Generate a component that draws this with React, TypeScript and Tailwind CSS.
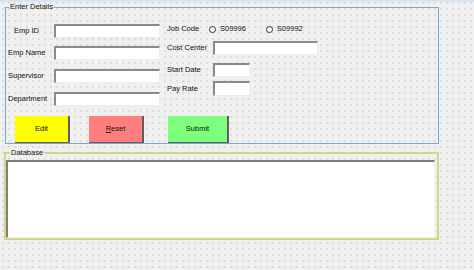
import React from 'react'

const labelCls = 'text-[7.5px] leading-[10px] text-[#111]'
const inputCls =
    'h-[14px] bg-white border-t-2 border-l-2 border-r border-b border-t-[#8a8a8a] border-l-[#8a8a8a] border-r-[#ececec] border-b-[#ececec]'

function Field({ label, width, className = '', labelClass = '' }: { label: string; width: string; className?: string; labelClass?: string }) {
    return (
        <div className={`flex items-center ${className}`}>
            <span className={`${labelCls} w-[46px] shrink-0 ${labelClass}`}>{label}</span>
            <div className={`${inputCls} ${width}`} />
        </div>
    )
}

function Radio({ label, className = '' }: { label: string; className?: string }) {
    return (
        <div className={`flex items-center ${className}`}>
            <span className="w-[7px] h-[7px] rounded-full border border-[#2e2e2e] bg-white" />
            <span className={`${labelCls} ml-[4px]`}>{label}</span>
        </div>
    )
}

export default function App() {
    return (
        <div
            className="w-[474px] h-[270px] overflow-hidden bg-[#f0f0f0] bg-[radial-gradient(circle,#d2d2d2_0.6px,transparent_0.9px)] bg-[length:6px_6px]"
            style={{ fontFamily: '"Liberation Sans", Arial, sans-serif' }}
        >
            <div className="h-[2px] bg-[#d6e4f3]" />

            {/* Enter Details */}
            <fieldset className="ml-[5px] w-[434px] border border-[#7aa6d6]">
                <legend className={`${labelCls} ml-[3px] px-[1px]`}>Enter Details</legend>
                <div className="flex items-start">
                    <div className="flex flex-col pl-[2px]">
                        <Field label="Emp ID" width="w-[106px]" className="mt-[12px]" labelClass="pl-[6px]" />
                        <Field label="Emp Name" width="w-[106px]" className="mt-[8px]" />
                        <Field label="Supervisor" width="w-[106px]" className="mt-[9px]" />
                        <Field label="Department" width="w-[106px]" className="mt-[9px]" />
                    </div>
                    <div className="flex flex-col ml-[7px]">
                        <div className="flex items-center h-[14px] mt-[10px]">
                            <span className={`${labelCls} w-[42px] shrink-0`}>Job Code</span>
                            <Radio label="S09996" />
                            <Radio label="S09992" className="ml-[20px]" />
                        </div>
                        <Field label="Cost Center" width="w-[105px]" className="mt-[5px]" />
                        <Field label="Start Date" width="w-[37px]" className="mt-[8px]" />
                        <Field label="Pay Rate" width="w-[37px] h-[15px]" className="mt-[4px]" />
                    </div>
                </div>
                <div className="flex mt-[10px] ml-[9px] text-[7.5px] text-[#111]">
                    <button className="w-[55px] h-[27px] bg-[#ffff00] border-r-2 border-b border-[#5e5e5e]">Edit</button>
                    <button className="w-[55px] h-[27px] ml-[19px] bg-[#ff7f7f] border-r-2 border-b border-[#5e5e5e]">
                        <span className="underline">R</span>eset
                    </button>
                    <button className="w-[61px] h-[27px] ml-[24px] bg-[#7dff7d] border-r-2 border-b border-[#5e5e5e]">Submit</button>
                </div>
            </fieldset>

            {/* Database */}
            <fieldset className="ml-[4px] mt-[4px] w-[435px] border-2 border-[#d4d48c]">
                <legend className={`${labelCls} ml-[4px] px-[1px]`}>Database</legend>
                <div className="mt-[2px] h-[78px] w-[429px] bg-white border-t-2 border-l-2 border-t-[#7e7e7e] border-l-[#7e7e7e] border-r border-b border-r-[#f5f5f5] border-b-[#f8f8e8]" />
            </fieldset>
        </div>
    )
}
